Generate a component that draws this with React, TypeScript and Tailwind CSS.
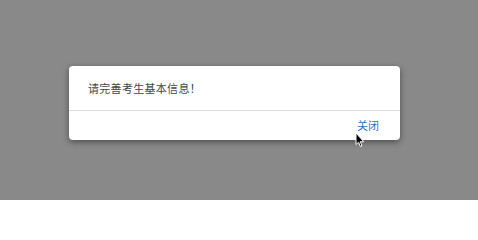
import React from "react";

export default function App() {
  return (
    <div
      className="w-[478px] h-[200px] bg-[#898989] pt-[66px] pl-[69px] relative overflow-hidden"
      style={{ fontFamily: '"Noto Sans CJK SC", "Noto Sans", sans-serif' }}
    >
      <div className="w-[331px] h-[74px] bg-white rounded-[4px] shadow-[0_2px_6px_rgba(0,0,0,0.45)] flex flex-col">
        <div className="h-[44px] flex items-center pl-[19px] text-[11px] text-[#444] tracking-[0.3px]">
          请完善考生基本信息！
        </div>
        <div className="h-px bg-[#dcdcdc]" />
        <div className="flex-1 flex items-center justify-end pr-[21px] text-[11px] text-[#2a6fc7]">
          关闭
        </div>
      </div>
      <svg
        className="absolute left-[355px] top-[132px]"
        width="10"
        height="16"
        viewBox="0 0 10 16"
      >
        <path
          d="M1 1 L1 12.5 L3.6 10.2 L5.4 14.5 L7 13.8 L5.3 9.7 L8.8 9.7 Z"
          fill="#000"
          stroke="#fff"
          strokeWidth="1"
          strokeLinejoin="round"
        />
      </svg>
    </div>
  );
}
